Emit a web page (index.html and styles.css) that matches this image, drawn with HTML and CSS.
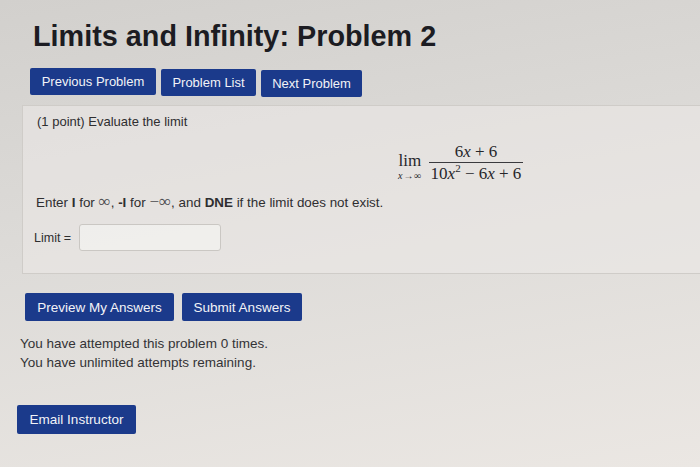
FILE: index.html
```html
<!DOCTYPE html>
<html>
<head>
<meta charset="utf-8">
<link rel="stylesheet" href="styles.css">
</head>
<body>
<div class="page">
  <h1 class="title">Limits and Infinity: Problem 2</h1>
  <div class="nav">
    <span class="btn btn-prev">Previous Problem</span>
    <span class="btn btn-list">Problem List</span>
    <span class="btn btn-next">Next Problem</span>
  </div>
  <div class="problem">
    <p class="points">(1 point) Evaluate the limit</p>
    <div class="math-row">
      <div class="math">
        <div class="lim">
          <span class="lim-word">lim</span>
          <span class="lim-sub"><i>x</i><span class="arrow">→∞</span></span>
        </div>
        <div class="frac">
          <span class="num">6<i>x</i> + 6</span>
          <span class="den">10<i>x</i><sup>2</sup> − 6<i>x</i> + 6</span>
        </div>
      </div>
    </div>
    <p class="enter">Enter <b>I</b> for <span class="inf">∞</span>, <b>-I</b> for <span class="inf">−∞</span>, and <b>DNE</b> if the limit does not exist.</p>
    <div class="answer">
      <label class="answer-label">Limit =</label>
      <span class="input"></span>
    </div>
  </div>
  <div class="actions">
    <span class="btn btn-preview">Preview My Answers</span>
    <span class="btn btn-submit">Submit Answers</span>
  </div>
  <div class="attempts">
    <p>You have attempted this problem 0 times.</p>
    <p>You have unlimited attempts remaining.</p>
  </div>
  <div class="email">
    <span class="btn btn-email">Email Instructor</span>
  </div>
</div>
</body>
</html>
```
FILE: styles.css
```css
html, body {
  margin: 0;
  padding: 0;
  height: 100%;
}
body {
  background: linear-gradient(170deg, #d2d0cd 0%, #dddbd8 45%, #ebe7e3 100%);
  font-family: "Liberation Sans", Arial, sans-serif;
  color: #2e2e30;
  overflow: hidden;
}
.page {
  padding: 20px 0 0 0;
}
.title {
  margin: 0 0 0 33px;
  font-size: 28.8px;
  font-weight: bold;
  color: #1c1c22;
  line-height: 32px;
}
.nav {
  display: flex;
  gap: 5px;
  margin: 16px 0 0 30px;
}
.btn {
  display: inline-flex;
  align-items: center;
  justify-content: center;
  background: #1b3a8b;
  color: #f2f3f7;
  border-radius: 2px;
  font-size: 13px;
  height: 27px;
  box-sizing: border-box;
  padding: 0;
  white-space: nowrap;
}
.btn-prev { width: 126px; }
.btn-list { width: 95px; margin-top: 1px; }
.btn-next { width: 101px; margin-top: 2px; }
.problem {
  margin: 8px 0 0 22px;
  height: 169px;
  box-sizing: border-box;
  background: rgba(236, 234, 231, 0.55);
  border: 1px solid #cfccc8;
  border-right: none;
  padding: 8px 0 0 14px;
}
.points {
  margin: 0;
  font-size: 13px;
  line-height: 16px;
}
.math-row {
  display: flex;
  justify-content: flex-start;
  padding-left: 361px;
  margin-top: 12px;
  font-family: "Liberation Serif", "Times New Roman", serif;
  color: #26262a;
}
.math {
  display: flex;
  align-items: center;
  gap: 7px;
}
.lim {
  display: flex;
  flex-direction: column;
  align-items: center;
  margin-top: 8px;
}
.lim-word {
  font-size: 17px;
  line-height: 18px;
}
.lim-sub {
  font-size: 10px;
  line-height: 12px;
  white-space: nowrap;
}
.lim-sub i {
  margin-right: 1px;
}
.arrow {
  letter-spacing: 0.5px;
}
.frac {
  display: flex;
  flex-direction: column;
  align-items: center;
  font-size: 17px;
}
.num {
  line-height: 20px;
  padding: 0 2px;
}
.den {
  line-height: 20px;
  border-top: 1.5px solid #3a3a3e;
  padding: 1px 2px 0;
}
.den sup {
  font-size: 11px;
  line-height: 0;
}
.enter {
  margin: 11px 0 0 -1px;
  font-size: 13.4px;
  line-height: 16px;
}
.inf {
  font-family: "Liberation Serif", "Times New Roman", serif;
  font-size: 17px;
  line-height: 14px;
  color: #4a4a4e;
}
.answer {
  display: flex;
  align-items: center;
  gap: 8px;
  margin: 13px 0 0 -3px;
}
.answer-label {
  font-size: 12.5px;
}
.input {
  display: block;
  width: 142px;
  height: 27px;
  box-sizing: border-box;
  background: rgba(244, 243, 241, 0.7);
  border: 1px solid #cac7c3;
  border-radius: 3px;
}
.actions {
  display: flex;
  gap: 8px;
  margin: 19px 0 0 25px;
}
.btn-preview { width: 149px; height: 28px; font-size: 13.5px; }
.btn-submit { width: 120px; height: 28px; font-size: 13.5px; }
.attempts {
  margin: 13px 0 0 20px;
  font-size: 13.5px;
  line-height: 19px;
  color: #333336;
}
.attempts p { margin: 0; }
.email {
  margin: 33px 0 0 17px;
}
.btn-email { width: 119px; height: 29px; font-size: 13.5px; }
```
